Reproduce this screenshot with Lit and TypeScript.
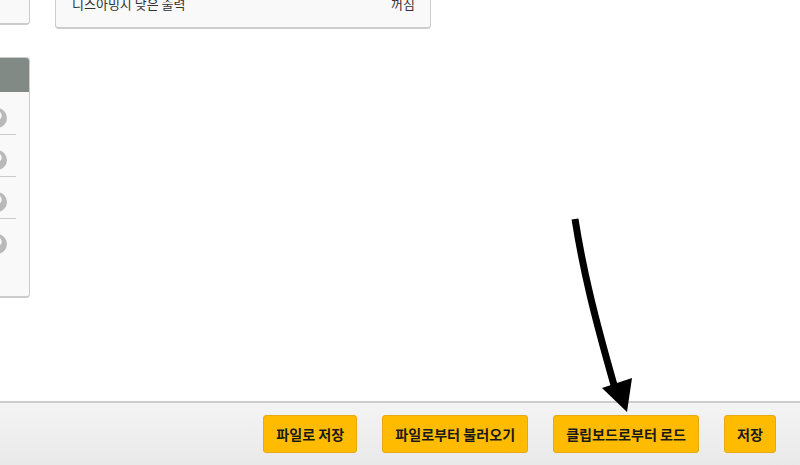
import { LitElement, html, css } from "lit";
import { customElement } from "lit/decorators.js";

@customElement("app-root")
export class AppRoot extends LitElement {
  static styles = css`
    :host {
      display: flex;
      flex-direction: column;
      width: 800px;
      height: 465px;
      overflow: hidden;
      position: relative;
      background: #fff;
      font-family: "Noto Sans CJK KR", "Noto Sans", sans-serif;
    }
    .content {
      flex: 1;
      min-height: 0;
      overflow: hidden;
      display: flex;
      gap: 25px;
      align-items: flex-start;
      margin-left: -300px;
      margin-top: -40px;
    }
    .col { display: flex; flex-direction: column; gap: 32px; width: 330px; flex: none; }
    .card {
      box-sizing: border-box;
      background: #f9f9f9;
      border: 1px solid #ccc;
      border-bottom-width: 2px;
      border-radius: 4px;
      overflow: hidden;
    }
    .left-top { height: 65px; }
    .head { height: 34px; background: #828a86; }
    .rows { padding: 0 13px 0 0; height: 204px; box-sizing: border-box; }
    .row {
      height: 42px;
      box-sizing: border-box;
      border-bottom: 1px solid #ccc;
      display: flex;
      justify-content: flex-end;
      align-items: flex-end;
      padding-bottom: 6px;
    }
    .row:first-child { height: 43px; }
    .row:last-child { border-bottom: none; padding-bottom: 7px; }
    .dot {
      width: 20px;
      height: 20px;
      margin-right: 9px;
      flex: none;
      display: block;
    }
    .right {
      box-sizing: border-box;
      width: 376px;
      flex: none;
      height: 69px;
      padding: 33px 15px 0 16px;
      display: flex;
      justify-content: space-between;
      font-size: 13px;
      line-height: 20px;
      color: #333;
    }
    .footer {
      flex: none;
      height: 64px;
      box-sizing: border-box;
      border-top: 2px solid #ccc;
      background: linear-gradient(#f4f4f4, #e9e9e9);
      display: flex;
      justify-content: flex-end;
      gap: 25px;
      padding: 12px 24px 0 0;
    }
    button {
      font-family: inherit;
      font-size: 14.1px;
      font-weight: 700;
      height: 38px;
      padding: 0 12px;
      background: #ffbb00;
      color: #1a1a1a;
      border: 1px solid #e4aa10;
      border-radius: 3px;
    }
    .arrow { position: absolute; left: 560px; top: 210px; width: 80px; height: 210px; }
  `;

  render() {
    const dot = html`<svg class="dot" viewBox="0 0 20 20">
      <circle cx="10" cy="10" r="10" fill="#b9b9b9"/>
      <path d="M6.500 7.500a3.500 3.500 0 1 1 5.500 3c-1.500 1-2 1.500-2 3" fill="none" stroke="#f9f9f9" stroke-width="2.400"/>
      <circle cx="10" cy="16" r="1.300" fill="#f9f9f9"/>
    </svg>`;
    return html`
      <div class="content">
        <div class="col">
          <div class="card left-top"></div>
          <div class="card">
            <div class="head"></div>
            <div class="rows">
              ${[0, 1, 2, 3].map(() => html`<div class="row">${dot}</div>`)}
            </div>
          </div>
        </div>
        <div class="card right"><span>디스아밍시 낮은 출력</span><span>꺼짐</span></div>
      </div>
      <div class="footer">
        <button>파일로 저장</button>
        <button>파일로부터 불러오기</button>
        <button>클립보드로부터 로드</button>
        <button>저장</button>
      </div>
      <svg class="arrow" viewBox="0 0 80 210">
        <path d="M15 9 C23 60 34 105 54 175" fill="none" stroke="#000" stroke-width="7"/>
        <path d="M42 178 L72 168 L67 202 Z" fill="#000"/>
      </svg>
    `;
  }
}
